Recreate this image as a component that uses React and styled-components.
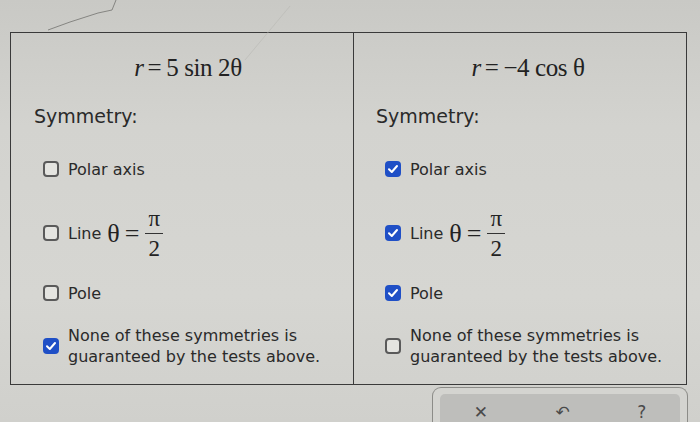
import React from 'react'
import styled, { createGlobalStyle } from 'styled-components';

const GlobalStyle = createGlobalStyle`
  html, body {
    margin: 0;
    padding: 0;
    width: 700px;
    height: 422px;
    overflow: hidden;
  }
  body {
    background: linear-gradient(180deg, #c9c9c5 0%, #d3d3cf 30%, #d6d6d2 70%, #d0d0cc 100%);
    font-family: "DejaVu Sans", Verdana, sans-serif;
    color: #2a2a2a;
  }
`;

const Page = styled.div`
  position: relative;
  width: 700px;
  height: 422px;
  padding-top: 32px;
  box-sizing: border-box;
  overflow: hidden;
`;

const Scribble = styled.svg`
  position: absolute;
  left: 0;
  top: 0;
  pointer-events: none;
`;

const Table = styled.div`
  margin-left: 10px;
  width: 677px;
  height: 353px;
  box-sizing: border-box;
  border: 1.5px solid #3a3a3a;
  display: grid;
  grid-template-columns: 342px 1fr;
`;

const Cell = styled.div`
  display: flex;
  flex-direction: column;
  padding-left: ${p => p.$pad}px;
  border-left: ${p => (p.$divider ? '1.5px solid #3a3a3a' : 'none')};
`;

const Formula = styled.div`
  height: 70px;
  display: flex;
  align-items: center;
  justify-content: center;
  margin-left: -${p => p.$pad}px;
  padding-left: ${p => p.$shift}px;
  font-family: "Liberation Serif", "Times New Roman", serif;
  font-size: 25px;
  letter-spacing: -0.4px;
  color: #222;
  i { font-style: italic; }
  b { font-weight: normal; margin: 0 5px 0 4px; }
`;

const Heading = styled.div`
  height: 26px;
  display: flex;
  align-items: center;
  font-size: 19px;
  color: #2a2a2a;
`;

const Option = styled.label`
  display: flex;
  align-items: center;
  gap: 9px;
  height: ${p => p.$h}px;
  margin-top: ${p => p.$mt}px;
  margin-left: 9px;
  font-size: 16px;
  line-height: 21px;
  color: #2a2a2a;
`;

const Box = styled.span`
  flex: none;
  width: 16px;
  height: 16px;
  box-sizing: border-box;
  border-radius: 4px;
  border: ${p => (p.$checked ? 'none' : '2px solid #5a5a5a')};
  background: ${p => (p.$checked ? '#1f4fc6' : '#e4e4e0')};
  display: flex;
  align-items: center;
  justify-content: center;
`;

const MathInline = styled.span`
  display: inline-flex;
  align-items: center;
  font-family: "Liberation Serif", "Times New Roman", serif;
  font-size: 26px;
  margin-left: -3px;
  color: #222;
`;

const Eq = styled.span`
  margin: 0 6px 0 5px;
`;

const Frac = styled.span`
  display: inline-flex;
  flex-direction: column;
  align-items: center;
  font-size: 23px;
  line-height: 23px;
  span:first-child {
    border-bottom: 1.5px solid #333;
    padding: 0 3px 3px;
  }
  span:last-child {
    padding-top: 3px;
  }
`;

const Footer = styled.div`
  display: flex;
  justify-content: flex-end;
  padding-right: 12px;
  margin-top: 2px;
`;

const Pad = styled.div`
  width: 256px;
  height: 35px;
  box-sizing: border-box;
  border: 1.5px solid #8c8c88;
  border-bottom: none;
  border-radius: 9px 9px 0 0;
  background: #d4d4d0;
  padding: 6px 7px 0;
`;

const PadInner = styled.div`
  height: 100%;
  border-radius: 5px 5px 0 0;
  background: #bebebb;
  display: flex;
  justify-content: space-around;
  align-items: flex-start;
  padding-top: 10px;
  box-sizing: border-box;
  color: #4a4a4a;
  font-size: 17px;
  line-height: 17px;
`;

function Check({ checked }) {
  return (
    <Box $checked={checked}>
      {checked && (
        <svg width="12" height="12" viewBox="0 0 12 12">
          <path d="M2 6.3 L4.8 9 L10 3" fill="none" stroke="#fff" strokeWidth="2" strokeLinecap="round" strokeLinejoin="round" />
        </svg>
      )}
    </Box>
  );
}

const rows = [
  { h: 28, mt: 26 },
  { h: 50, mt: 25 },
  { h: 28, mt: 21 },
  { h: 46, mt: 16 },
];

function Column({ formula, checks, pad, shift, divider }) {
  return (
    <Cell $pad={pad} $divider={divider}>
      <Formula $pad={pad} $shift={shift}>{formula}</Formula>
      <Heading>Symmetry:</Heading>
      <Option $h={rows[0].h} $mt={rows[0].mt}>
        <Check checked={checks[0]} />
        Polar axis
      </Option>
      <Option $h={rows[1].h} $mt={rows[1].mt}>
        <Check checked={checks[1]} />
        <span>Line</span>
        <MathInline>
          θ<Eq>=</Eq>
          <Frac><span>π</span><span>2</span></Frac>
        </MathInline>
      </Option>
      <Option $h={rows[2].h} $mt={rows[2].mt}>
        <Check checked={checks[2]} />
        Pole
      </Option>
      <Option $h={rows[3].h} $mt={rows[3].mt}>
        <Check checked={checks[3]} />
        <span>None of these symmetries is<br />guaranteed by the tests above.</span>
      </Option>
    </Cell>
  );
}

export default function App() {
  return (
    <>
      <GlobalStyle />
      <Page>
        <Scribble width="700" height="60">
          <polyline points="48,30 70,22 98,13 112,10 116,0" fill="none" stroke="#7d7d79" strokeWidth="0.9" />
          <line x1="290" y1="6" x2="245" y2="60" stroke="#b8b8b4" strokeWidth="0.6" />
        </Scribble>
        <Table>
          <Column
            pad={23}
            shift={12}
            checks={[false, false, false, true]}
            formula={<><i>r</i><b>=</b>5 sin 2θ</>}
          />
          <Column
            pad={22}
            shift={16}
            divider
            checks={[true, true, true, false]}
            formula={<><i>r</i><b>=</b>−4 cos θ</>}
          />
        </Table>
        <Footer>
          <Pad>
            <PadInner>
              <span>✕</span>
              <span>↶</span>
              <span>?</span>
            </PadInner>
          </Pad>
        </Footer>
      </Page>
    </>
  );
}
